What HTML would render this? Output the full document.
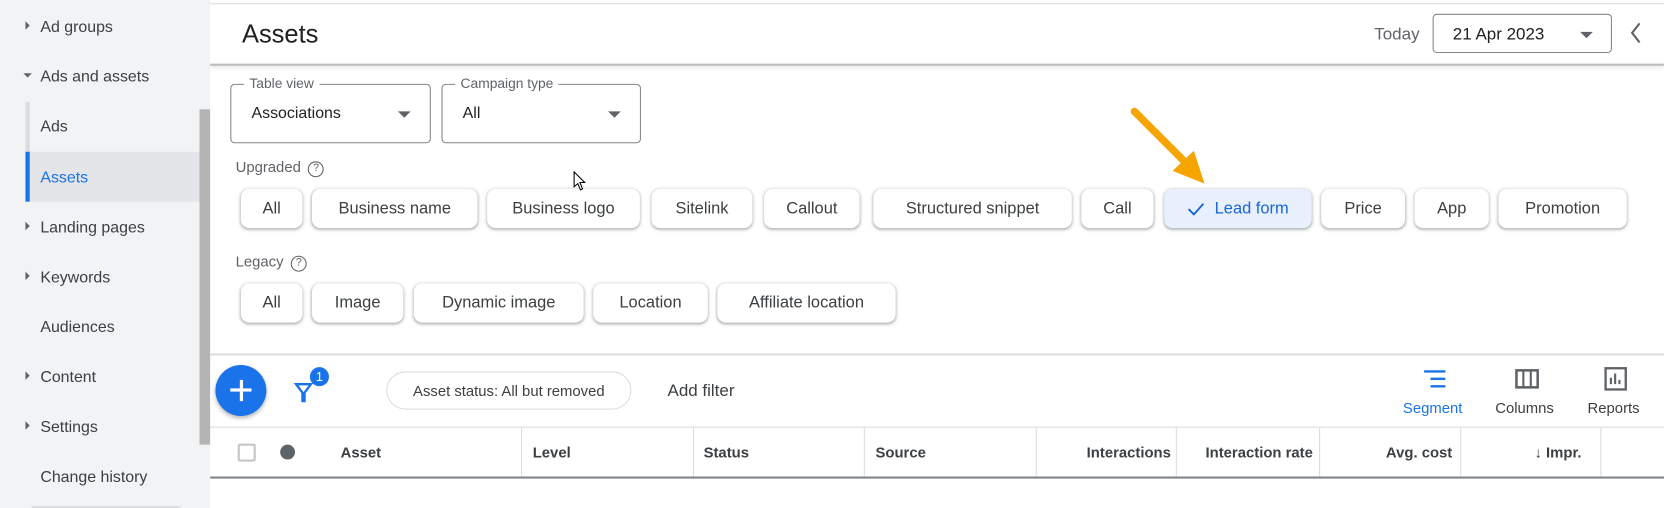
<!DOCTYPE html>
<html><head><meta charset="utf-8"><style>
*{box-sizing:border-box;margin:0;padding:0}
html,body{width:1664px;height:508px;overflow:hidden;background:#fff;font-family:"Liberation Sans",Arial,sans-serif;color:#3c4043}
#w{position:absolute;left:0;top:0;width:1568px;height:479px;transform:scale(1.0612);transform-origin:0 0}
.a{position:absolute}
.side{left:0;top:0;width:198px;height:479px;background:#f1f3f4}
.si{position:absolute;left:38px;font-size:15px;color:#3c4043;line-height:20px}
.tri{position:absolute;left:24px;width:0;height:0}
.tr{border-top:4px solid transparent;border-bottom:4px solid transparent;border-left:4px solid #5f6368}
.td{border-left:4px solid transparent;border-right:4px solid transparent;border-top:4px solid #5f6368}
.chip{position:absolute;height:37px;border-radius:8px;background:#fff;box-shadow:0 1px 2px rgba(60,64,67,.3),0 1px 3px 1px rgba(60,64,67,.15);font-size:15.5px;color:#3c4043;display:flex;align-items:center;justify-content:center;padding-top:1px}
.dd{position:absolute;border:1px solid #80868b;border-radius:4px;height:56px}
.dd .l{position:absolute;top:-9px;left:12px;background:#fff;padding:0 5px;font-size:13px;color:#5f6368}
.dd .v{position:absolute;left:19px;top:18px;font-size:15px;color:#202124}
.dd .c{position:absolute;right:18px;top:25px;border-left:6px solid transparent;border-right:6px solid transparent;border-top:6px solid #5f6368}
.th{position:absolute;top:418px;font-size:14px;font-weight:bold;color:#3c4043}
.sep{position:absolute;top:403px;width:1px;height:47px;background:#dadce0}
.tl{position:absolute;font-size:14px;color:#5f6368}
</style></head><body><div id="w">
<div class="a" style="left:0;top:3px;width:1568px;height:1px;background:#dadce0"></div>
<div class="a side"></div>
<div class="a" style="left:188px;top:103px;width:10px;height:316px;background:#b4b4b4"></div>
<div class="a" style="left:24px;top:96px;width:4px;height:47px;background:#dadce0"></div>
<div class="a" style="left:24px;top:143px;width:164px;height:47px;background:#e3e5e8"></div>
<div class="a" style="left:24px;top:143px;width:4px;height:47px;background:#1a73e8"></div>
<div class="tri tr" style="top:20px"></div><div class="si" style="top:16px">Ad groups</div>
<div class="tri td" style="top:69px;left:22px"></div><div class="si" style="top:63px">Ads and assets</div>
<div class="si" style="top:110px">Ads</div>
<div class="si" style="top:158px;color:#1a73e8">Assets</div>
<div class="tri tr" style="top:209px"></div><div class="si" style="top:205px">Landing pages</div>
<div class="tri tr" style="top:256px"></div><div class="si" style="top:252px">Keywords</div>
<div class="si" style="top:299px">Audiences</div>
<div class="tri tr" style="top:350px"></div><div class="si" style="top:346px">Content</div>
<div class="tri tr" style="top:397px"></div><div class="si" style="top:393px">Settings</div>
<div class="si" style="top:440px">Change history</div>
<div class="a" style="left:30px;top:477px;width:140px;height:2px;background:#dadce0"></div>

<div class="a" style="left:228px;top:19px;font-size:24px;color:#202124">Assets</div>
<div class="a" style="left:1295px;top:24px;font-size:16px;color:#5f6368">Today</div>
<div class="a" style="left:1350px;top:13px;width:169px;height:37px;border:1px solid #80868b;border-radius:4px"></div>
<div class="a" style="left:1369px;top:24px;font-size:16px;color:#202124">21 Apr 2023</div>
<div class="a" style="left:1489px;top:30px;border-left:6px solid transparent;border-right:6px solid transparent;border-top:6px solid #5f6368"></div>
<svg class="a" style="left:1535px;top:20px" width="14" height="22"><path d="M10 2 L3 11 L10 20" fill="none" stroke="#5f6368" stroke-width="2"/></svg>
<div class="a" style="left:198px;top:60px;width:1370px;height:2px;background:#bdbdbd;box-shadow:0 2px 3px rgba(0,0,0,.12)"></div>

<div class="dd" style="left:217px;top:79px;width:189px"><span class="l">Table view</span><span class="v">Associations</span><span class="c"></span></div>
<div class="dd" style="left:416px;top:79px;width:188px"><span class="l">Campaign type</span><span class="v">All</span><span class="c"></span></div>

<div class="tl" style="left:222px;top:149px">Upgraded <span style="display:inline-block;width:15px;height:15px;border:1.5px solid #5f6368;border-radius:50%;font-size:10px;text-align:center;line-height:12px;vertical-align:1px;margin-left:3px">?</span></div>
<div class="chip" style="left:227px;top:178px;width:58px">All</div>
<div class="chip" style="left:294px;top:178px;width:156px">Business name</div>
<div class="chip" style="left:459px;top:178px;width:144px">Business logo</div>
<div class="chip" style="left:614px;top:178px;width:95px">Sitelink</div>
<div class="chip" style="left:720px;top:178px;width:90px">Callout</div>
<div class="chip" style="left:823px;top:178px;width:187px">Structured snippet</div>
<div class="chip" style="left:1019px;top:178px;width:68px">Call</div>
<div class="chip" style="left:1097px;top:178px;width:139px;background:#e8f0fe;color:#1967d2"><svg width="16" height="14" style="margin-right:10px"><path d="M1 7 L6 12 L15 2" fill="none" stroke="#1967d2" stroke-width="1.8"/></svg>Lead form</div>
<div class="chip" style="left:1245px;top:178px;width:79px">Price</div>
<div class="chip" style="left:1333px;top:178px;width:70px">App</div>
<div class="chip" style="left:1412px;top:178px;width:121px">Promotion</div>

<div class="tl" style="left:222px;top:238px">Legacy <span style="display:inline-block;width:15px;height:15px;border:1.5px solid #5f6368;border-radius:50%;font-size:10px;text-align:center;line-height:12px;vertical-align:1px;margin-left:3px">?</span></div>
<div class="chip" style="left:227px;top:267px;width:58px">All</div>
<div class="chip" style="left:294px;top:267px;width:86px">Image</div>
<div class="chip" style="left:390px;top:267px;width:160px">Dynamic image</div>
<div class="chip" style="left:559px;top:267px;width:108px">Location</div>
<div class="chip" style="left:676px;top:267px;width:168px">Affiliate location</div>

<svg class="a" style="left:1055px;top:95px" width="90" height="85"><path d="M14 10 L62 58" stroke="#f5a400" stroke-width="7" stroke-linecap="round"/><path d="M50 66 L80 78 L70 47 Z" fill="#f5a400"/></svg>
<svg class="a" style="left:540px;top:161px" width="14" height="20"><path d="M1 1 L1 15 L4.5 12 L7 18 L9 17 L6.5 11 L11 11 Z" fill="#fff" stroke="#000" stroke-width="1"/></svg>

<div class="a" style="left:198px;top:333px;width:1370px;height:2px;background:#dadce0"></div>
<div class="a" style="left:203px;top:344px;width:48px;height:48px;border-radius:50%;background:#1a73e8;box-shadow:0 2px 4px rgba(0,0,0,.3)"></div>
<div class="a" style="left:226px;top:358px;width:3px;height:20px;background:#fff"></div>
<div class="a" style="left:217px;top:366px;width:20px;height:3px;background:#fff"></div>
<svg class="a" style="left:277px;top:358px" width="20" height="22"><path d="M2 4 H16 L10 12 V20 H8 V12 Z" fill="none" stroke="#1a73e8" stroke-width="2.2"/></svg>
<div class="a" style="left:292px;top:346px;width:18px;height:18px;border-radius:50%;background:#1a73e8;color:#fff;font-size:12px;text-align:center;line-height:18px">1</div>
<div class="a" style="left:364px;top:350px;width:231px;height:36px;border:1px solid #dadce0;border-radius:18px;font-size:14px;color:#3c4043;text-align:center;line-height:35px">Asset status: All but removed</div>
<div class="a" style="left:629px;top:360px;font-size:16px;color:#3c4043">Add filter</div>
<svg class="a" style="left:1340px;top:348px" width="24" height="20"><path d="M2 2 H22 M8 9 H22 M8 16 H22" stroke="#1a73e8" stroke-width="2.2"/></svg>
<div class="a" style="left:1322px;top:376px;font-size:14px;color:#1a73e8">Segment</div>
<svg class="a" style="left:1427px;top:347px" width="24" height="22"><rect x="2" y="2" width="20" height="16" fill="none" stroke="#5f6368" stroke-width="2.4"/><path d="M8.5 2 V18 M15.5 2 V18" stroke="#5f6368" stroke-width="2"/></svg>
<div class="a" style="left:1409px;top:376px;font-size:14px;color:#3c4043">Columns</div>
<svg class="a" style="left:1511px;top:345px" width="24" height="24"><rect x="2" y="2" width="19" height="20" fill="none" stroke="#5f6368" stroke-width="2.2"/><path d="M7 17 V11 M11 17 V7 M15 17 V13" stroke="#5f6368" stroke-width="2"/></svg>
<div class="a" style="left:1496px;top:376px;font-size:14px;color:#3c4043">Reports</div>

<div class="a" style="left:198px;top:402px;width:1370px;height:1px;background:#dadce0"></div>
<div class="a" style="left:224px;top:418px;width:17px;height:17px;border:2px solid #c4c7c5;border-radius:2px"></div>
<div class="a" style="left:264px;top:419px;width:14px;height:14px;border-radius:50%;background:#5f6368"></div>
<div class="th" style="left:321px">Asset</div>
<div class="sep" style="left:491px"></div><div class="th" style="left:502px">Level</div>
<div class="sep" style="left:653px"></div><div class="th" style="left:663px">Status</div>
<div class="sep" style="left:814px"></div><div class="th" style="left:825px">Source</div>
<div class="sep" style="left:976px"></div><div class="th" style="left:1024px">Interactions</div>
<div class="sep" style="left:1108px"></div><div class="th" style="left:1136px">Interaction rate</div>
<div class="sep" style="left:1243px"></div><div class="th" style="left:1306px">Avg. cost</div>
<div class="sep" style="left:1376px"></div><div class="th" style="left:1446px"><span style="font-weight:normal">↓</span> Impr.</div>
<div class="sep" style="left:1508px"></div>
<div class="a" style="left:198px;top:449px;width:1370px;height:2px;background:#80868b"></div>
</div></body></html>
